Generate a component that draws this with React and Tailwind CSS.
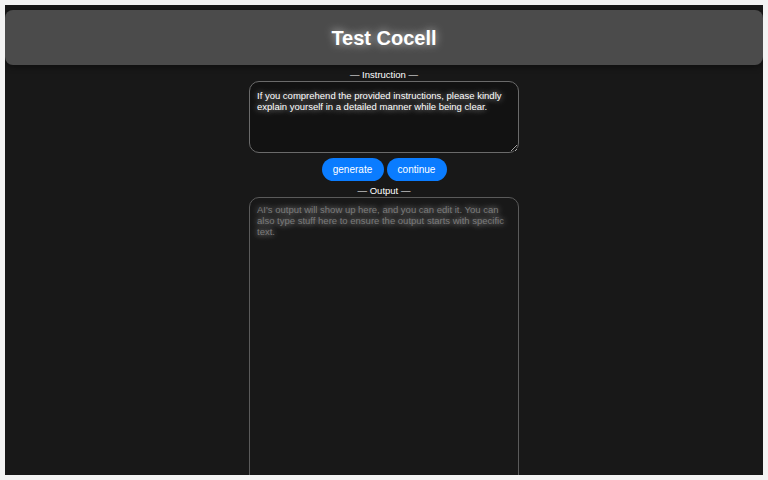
import React, { useState } from 'react';

const glow = '[text-shadow:0_0_6px_rgba(255,255,255,0.75)]';

const App = () => {
  const [instruction, setInstruction] = useState(
    'If you comprehend the provided instructions, please kindly explain yourself in a detailed manner while being clear.'
  );
  const [output, setOutput] = useState('');

  return (
    <div className="h-screen bg-[#f3f3f3] p-[5px]" style={{ fontFamily: '"Liberation Sans", Arial, sans-serif' }}>
      <div className="h-full overflow-hidden bg-[#181818] pt-[5px]">

        {/* Title bar */}
        <header className="h-[55px] flex items-center justify-center rounded-lg bg-[#4b4b4b] shadow-[0_2px_6px_rgba(0,0,0,0.4)]">
          <h1 className="text-[20px] font-bold text-white [text-shadow:0_0_8px_rgba(255,255,255,0.7)]">
            Test Cocell
          </h1>
        </header>

        {/* Prompt + output column */}
        <main className="w-[270px] mx-auto flex flex-col items-center pt-[4px]">
          <label className="text-[9.5px] leading-[12px] text-white">— Instruction —</label>
          <textarea
            value={instruction}
            onChange={e => setInstruction(e.target.value)}
            className={`w-full h-[72px] px-[7px] pt-[8px] pb-[6px] rounded-[10px] border border-[#6a6a6a] bg-[#121212] text-white text-[9.5px] leading-[11px] outline-none ${glow}`}
          />

          <div className="flex gap-[3px] mt-[5px]">
            <button className="h-[23px] w-[62px] rounded-full bg-[#0a7cff] text-white text-[10px]">generate</button>
            <button className="h-[23px] w-[60px] rounded-full bg-[#0a7cff] text-white text-[10px]">continue</button>
          </div>

          <label className="text-[9.5px] leading-[12px] text-white mt-[4px]">— Output —</label>
          <textarea
            value={output}
            onChange={e => setOutput(e.target.value)}
            placeholder="AI's output will show up here, and you can edit it. You can also type stuff here to ensure the output starts with specific text."
            className={`w-full h-[300px] px-[7px] pt-[6px] pb-[6px] rounded-[10px] border border-[#5a5a5a] bg-[#181818] text-white text-[9.5px] leading-[11px] outline-none placeholder:text-[#7a7a7a] ${glow}`}
          />
        </main>
      </div>
    </div>
  );
};

export default App;
